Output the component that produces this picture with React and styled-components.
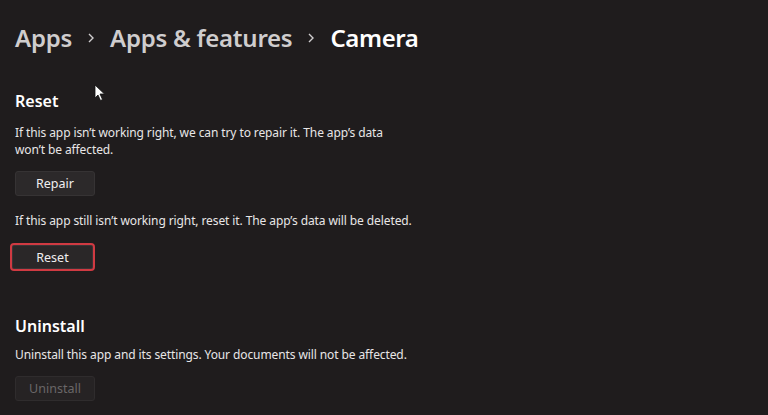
import React from "react";
import styled, { createGlobalStyle } from "styled-components";

const Global = createGlobalStyle`
  html, body { margin: 0; padding: 0; background: #1f1c1d; }
  body { font-family: "Noto Sans", "Open Sans", sans-serif; color: #e8e8e8; }
`;

const Page = styled.div`
  position: relative;
  width: 768px;
  height: 415px;
  overflow: hidden;
  background: #1f1c1d;
  padding: 20px 0 0 15px;
  box-sizing: border-box;
`;

const Crumbs = styled.div`
  display: flex;
  align-items: center;
  height: 34px;
  font-size: 24px;
  font-weight: 600;
`;

const Crumb = styled.span`
  color: ${(p) => (p.$current ? "#ffffff" : "#cfcdce")};
  letter-spacing: ${(p) => (p.$current ? "-0.4px" : "-0.25px")};
`;

const Chevron = styled.svg`
  width: 10px;
  height: 12px;
  margin: 1px 14px 0 14px;
`;

const Section = styled.section`
  display: flex;
  flex-direction: column;
  align-items: flex-start;
  margin-top: ${(p) => p.$top}px;
`;

const Heading = styled.h2`
  margin: 0;
  font-size: 16px;
  font-weight: 600;
  color: #ffffff;
  line-height: 22px;
`;

const Text = styled.p`
  margin: ${(p) => p.$top || 0}px 0 0;
  font-size: 12px;
  line-height: 17px;
  letter-spacing: -0.1px;
  color: #e8e6e7;
  white-space: nowrap;
`;

const Button = styled.button`
  margin-top: ${(p) => p.$top || 0}px;
  width: 80px;
  height: 25px;
  box-sizing: border-box;
  border-radius: 3px;
  background: #2c292a;
  border: 1px solid #363334;
  color: #f0eeef;
  font-family: inherit;
  font-size: 12.5px;
  padding: 0;
  &:disabled {
    background: #262324;
    border-color: #2f2c2d;
    color: #6a6768;
  }
`;

const FlaggedButton = styled(Button)`
  width: 85px;
  height: 28px;
  margin-left: -5px;
  border: 2px solid #d03a42;
  border-radius: 4px;
  box-shadow: inset 0 0 0 1px #3a3436;
  background: #2a2728;
`;

const Cursor = styled.svg`
  position: absolute;
  left: 94px;
  top: 84px;
  width: 12px;
  height: 18px;
`;

const Sep = () => (
  <Chevron viewBox="0 0 10 12">
    <path d="M3 2 L7 6 L3 10" fill="none" stroke="#cfcdce" strokeWidth="1.4" />
  </Chevron>
);

export default function App() {
  return (
    <>
      <Global />
      <Page>
        <Crumbs>
          <Crumb>Apps</Crumb>
          <Sep />
          <Crumb>Apps &amp; features</Crumb>
          <Sep />
          <Crumb $current>Camera</Crumb>
        </Crumbs>
        <Section $top={36}>
          <Heading>Reset</Heading>
          <Text $top={12}>
            If this app isn’t working right, we can try to repair it. The app’s data
            <br />
            won’t be affected.
          </Text>
          <Button $top={13}>Repair</Button>
          <Text $top={16}>
            If this app still isn’t working right, reset it. The app’s data will be deleted.
          </Text>
          <FlaggedButton $top={14}>Reset</FlaggedButton>
        </Section>
        <Section $top={44}>
          <Heading>Uninstall</Heading>
          <Text $top={9}>
            Uninstall this app and its settings. Your documents will not be affected.
          </Text>
          <Button $top={13} disabled>
            Uninstall
          </Button>
        </Section>
        <Cursor viewBox="0 0 12 18">
          <path d="M1 1 L1 14 L4 11 L6.5 16.5 L8.5 15.5 L6 10 L10.5 10 Z" fill="#ffffff" stroke="#111" strokeWidth="0.8" />
        </Cursor>
      </Page>
    </>
  );
}
